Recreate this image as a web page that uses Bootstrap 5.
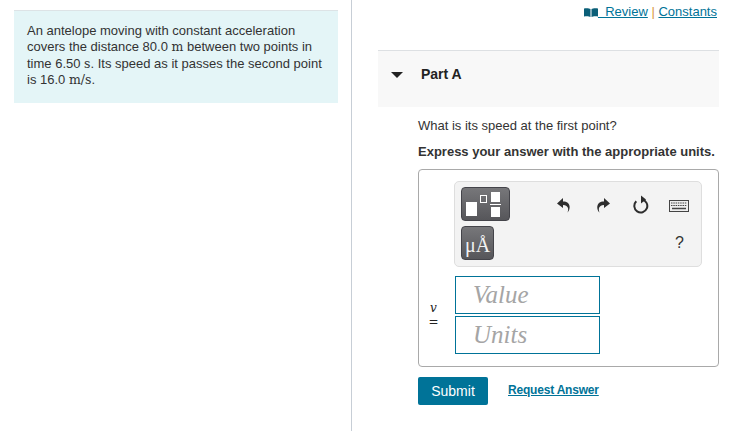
<!DOCTYPE html>
<html lang="en">
<head>
    <meta charset="UTF-8">
    <meta name="viewport" content="width=device-width, initial-scale=1.0">
    <title>Part A</title>
    <link href="https://cdn.jsdelivr.net/npm/bootstrap@5.3.3/dist/css/bootstrap.min.css" rel="stylesheet">
    <style>
        html, body { height: 431px; overflow: hidden; }
        body { font-family: "Liberation Sans", Arial, sans-serif; font-size: 13px; color: #333; background: #fff; }
        a { color: #007398; }
        .math-font { font-family: "DejaVu Serif", "Liberation Serif", serif; font-size: 12.5px; }
        .left-pane { width: 352px; height: 431px; border-right: 1px solid #c7ced6; padding: 10px 13px 0 14px; flex: none; }
        .intro-box { background: #e4f5f7; border-top: 1px solid #dde3e6; height: 93px; padding: 12px 12px 0 13px; line-height: 16.4px; }
        .right-pane { width: 391px; padding: 0 24px 0 26px; }
        .top-links { height: 50px; padding: 3px 2px 0 0; line-height: 17px; }
        .book-icon { vertical-align: -1px; }
        .link-sep { color: #d9963a; }
        .part-head { height: 57px; background: #f8f8f8; border-top: 1px solid #dde0e3; padding: 0 0 9px 13px; gap: 18px; }
        .part-arrow { width: 0; height: 0; border-left: 6px solid transparent; border-right: 6px solid transparent; border-top: 6px solid #222; }
        .part-title { font-size: 14px; font-weight: 700; color: #222; }
        .answer-wrap { margin-left: 40px; }
        .question { padding-top: 11px; }
        .question p { margin: 0; line-height: 16px; }
        .prompt-strong { font-weight: 700; margin-top: 10px !important; }
        .answer-box { height: 198px; margin-top: 9px; border: 1px solid #a9a9a9; border-radius: 4px; padding: 11px 16px 0 35px; }
        .tool-panel { width: 248px; height: 86px; background: #f3f3f3; border: 1px solid #dedede; border-radius: 5px; padding: 5px 12px 0 6px; }
        .tool-row { height: 34px; margin-bottom: 5px; }
        .tool-btn { height: 34px; background: linear-gradient(#77777a, #56565a); border: 1px solid #44444a; border-radius: 4px; color: #fff; }
        .tool-wide { width: 49px; }
        .tool-units { width: 33px; font-family: "Liberation Serif", serif; font-size: 20px; line-height: 36px; text-align: center; color: #f2f2f2; }
        .tool-icons { padding-top: 1px; }
        .undo-icon { margin-right: 23px; }
        .redo-icon { margin-right: 21px; }
        .reload-icon { margin-right: 19px; }
        .keys-icon { margin-top: 2px; }
        .help-mark { font-size: 16px; margin-right: 5px; color: #333; }
        .entry-row { margin: 9px 0 0 -36px; }
        .var-label { width: 37px; padding-right: 6px; font-family: "DejaVu Serif", "Liberation Serif", serif; font-size: 12px; line-height: 14px; text-align: center; color: #222; }
        .entry-fields { gap: 2px; }
        .entry-input { width: 145px; height: 38px; border: 1px solid #007398; padding: 0 17px; font-family: "Liberation Serif", serif; font-style: italic; font-size: 25px; line-height: 34px; color: #999; background: #fff; border-radius: 0; }
        .entry-input::placeholder { color: #a5a5a5; opacity: 1; }
        .action-row { margin-top: 10px; gap: 20px; }
        .submit-btn { width: 70px; height: 28px; padding: 0; background: #007398; border: 0; border-radius: 2px; color: #fff; font-size: 14px; }
        .answer-link { font-weight: 700; font-size: 12px; letter-spacing: -0.2px; margin-top: -3px; }
    </style>
</head>
<body>
<div class="d-flex">
    <div class="left-pane">
        <div class="intro-box">
            An antelope moving with constant acceleration covers the distance 80.0 <span class="math-font">m</span> between two points in time 6.50 <span class="math-font">s</span>. Its speed as it passes the second point is 16.0 <span class="math-font">m/s</span>.
        </div>
    </div>

    <div class="right-pane">
        <div class="top-links text-end">
            <svg class="book-icon" width="14" height="9" viewBox="0 0 14 9"><path d="M0 .5C2 0 5 0 6.500 1v8C5 8 2 8 0 8.500zM14 .5C12 0 9 0 7.500 1v8C9 8 12 8 14 8.500z" fill="#0b5f78"/></svg><a href="#">&nbsp;&nbsp;Review</a> <span class="link-sep">|</span> <a href="#">Constants</a>
        </div>

        <div class="part-head d-flex align-items-center">
            <span class="part-arrow"></span>
            <span class="part-title">Part A</span>
        </div>

        <div class="answer-wrap">
            <div class="question">
                <p>What is its speed at the first point?</p>
                <p class="prompt-strong">Express your answer with the appropriate units.</p>
            </div>

            <div class="answer-box">
                <div class="tool-panel">
                    <div class="tool-row d-flex justify-content-between">
                        <div class="tool-btn tool-wide d-flex align-items-center justify-content-center">
                            <svg width="41" height="28" viewBox="0 0 41 28">
                                <rect x="1" y="12" width="11" height="14" fill="#fff"/>
                                <rect x="15.500" y="5.500" width="6" height="7" fill="none" stroke="#fff"/>
                                <rect x="26" y="2" width="9" height="10" fill="#fff"/>
                                <rect x="25" y="14" width="11" height="1" fill="#fff"/>
                                <rect x="26" y="17" width="9" height="10" fill="#fff"/>
                            </svg>
                        </div>
                        <div class="tool-icons d-flex align-items-center">
                            <svg class="undo-icon" width="16" height="16" viewBox="0 0 16 16"><path d="M7 1 1 6.500 7 11V8c3 0 4.500 1.500 5 3 .3 1 .2 3-.5 4.500C14.500 13 15.500 4.500 7 4.500z" fill="#2d2d2d"/></svg>
                            <svg class="redo-icon" width="16" height="16" viewBox="0 0 16 16"><path d="m9 1 6 5.500L9 11V8C6 8 4.500 9.500 4 11c-.3 1-.2 3 .5 4.500C1.500 13 .5 4.500 9 4.500z" fill="#2d2d2d"/></svg>
                            <svg class="reload-icon" width="18" height="19" viewBox="0 0 18 19"><path d="M10 4.600A6.500 6.500 0 1 1 4.300 6.300" fill="none" stroke="#2d2d2d" stroke-width="2"/><path d="M9 .5v8l5-4z" fill="#2d2d2d"/></svg>
                            <svg class="keys-icon" width="20" height="12" viewBox="0 0 20 12"><rect x=".5" y=".5" width="19" height="11" fill="#eee" stroke="#444"/><path d="M2 3h16M2 5.500h16" stroke="#444" stroke-dasharray="1.500 .8"/><path d="M3 8.500h14" stroke="#444" stroke-width="1.500"/></svg>
                        </div>
                    </div>
                    <div class="tool-row d-flex justify-content-between align-items-center">
                        <div class="tool-btn tool-units">&#956;&#197;</div>
                        <span class="help-mark">?</span>
                    </div>
                </div>

                <div class="entry-row d-flex align-items-center">
                    <div class="var-label"><i>v</i><br>=</div>
                    <div class="entry-fields d-flex flex-column">
                        <input class="entry-input" type="text" placeholder="Value">
                        <input class="entry-input" type="text" placeholder="Units">
                    </div>
                </div>
            </div>

            <div class="action-row d-flex align-items-center">
                <button class="submit-btn btn" type="button">Submit</button>
                <a class="answer-link" href="#">Request Answer</a>
            </div>
        </div>
    </div>
</div>
</body>
</html>
